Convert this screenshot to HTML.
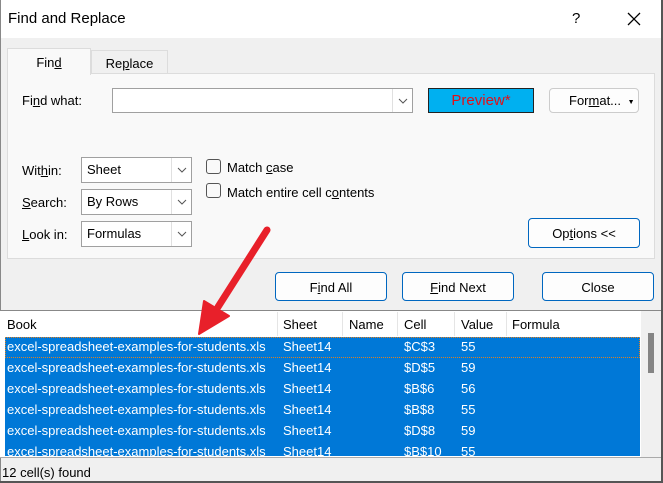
<!DOCTYPE html>
<html><head><meta charset="utf-8"><style>
*{box-sizing:border-box;margin:0;padding:0}
body{width:663px;height:483px;overflow:hidden;background:#f0f0f0;font-family:"Liberation Sans",sans-serif;font-size:13px;color:#000;position:relative}
.a{position:absolute}
.title{left:0;top:0;width:663px;height:38px;background:#fff}
.panel{left:7px;top:73px;width:648px;height:186px;background:#f9f9f9;border:1px solid #dcdcdc}
.tab{background:#f9f9f9;border:1px solid #dcdcdc;border-bottom:none;text-align:center}
.dd{background:#fff;border:1px solid #a0a0a0;padding-left:5px;line-height:24px}
.dd .ar{position:absolute;right:0;top:0;width:20px;height:100%;border-left:1px solid #e0e0e0}
.dd .ar svg{position:absolute;left:5px;top:9px}
.btn{background:#fdfdfd;border:1px solid #0067c0;border-radius:4px;text-align:center}
.cb{width:15px;height:15px;border:1px solid #555;border-radius:3px;background:#f9f9f9}
.row{left:5px;width:635px;height:21px;background:#0078d7;color:#fff;line-height:20px}
.row span,.hd span{position:absolute}
</style></head><body>
<div class="a title"></div>
<div class="a" style="left:8px;top:10px;font-size:15px">Find and Replace</div>
<div class="a" style="left:572px;top:10px;font-size:15px">?</div>
<svg class="a" style="left:627px;top:12px" width="14" height="14"><path d="M1 1L13 13M13 1L1 13" stroke="#000" stroke-width="1.3"/></svg>
<div class="a" style="left:661px;top:0;width:2px;height:483px;background:#555"></div>
<div class="a" style="left:0;top:0;width:1px;height:483px;background:#888"></div>
<div class="a panel"></div>
<div class="a tab" style="left:7px;top:48px;width:84px;height:27px;line-height:28px">Fin<u>d</u></div>
<div class="a tab" style="left:91px;top:50px;width:77px;height:23px;line-height:25px;background:#f0f0f0">Re<u>p</u>lace</div>
<div class="a" style="left:22px;top:93px">Fi<u>n</u>d what:</div>
<div class="a dd" style="left:112px;top:88px;width:301px;height:25px"><div class="ar"><svg width="10" height="6"><path d="M1 1L5 5L9 1" stroke="#555" fill="none"/></svg></div></div>
<div class="a" style="left:428px;top:88px;width:106px;height:25px;background:#00b0f0;border:1px solid #222;color:#e0101a;font-size:15px;text-align:center;line-height:24px">Preview*</div>
<div class="a" style="left:549px;top:88px;width:90px;height:25px;border:1px solid #ccc;border-radius:4px;background:#fdfdfd;line-height:24px;padding-left:19px">For<u>m</u>at... <span style="font-size:7px;margin-left:3px;vertical-align:1px">▼</span></div>
<div class="a" style="left:22px;top:163px">Wit<u>h</u>in:</div>
<div class="a" style="left:22px;top:195px"><u>S</u>earch:</div>
<div class="a" style="left:22px;top:227px"><u>L</u>ook in:</div>
<div class="a dd" style="left:81px;top:157px;width:111px;height:26px">Sheet<div class="ar"><svg width="10" height="6"><path d="M1 1L5 5L9 1" stroke="#555" fill="none"/></svg></div></div>
<div class="a dd" style="left:81px;top:189px;width:111px;height:26px">By Rows<div class="ar"><svg width="10" height="6"><path d="M1 1L5 5L9 1" stroke="#555" fill="none"/></svg></div></div>
<div class="a dd" style="left:81px;top:221px;width:111px;height:26px">Formulas<div class="ar"><svg width="10" height="6"><path d="M1 1L5 5L9 1" stroke="#555" fill="none"/></svg></div></div>
<div class="a cb" style="left:206px;top:159px"></div>
<div class="a cb" style="left:206px;top:183px"></div>
<div class="a" style="left:227px;top:160px">Match <u>c</u>ase</div>
<div class="a" style="left:227px;top:185px">Match entire cell c<u>o</u>ntents</div>
<div class="a btn" style="left:528px;top:218px;width:112px;height:30px;line-height:29px">Op<u>t</u>ions &lt;&lt;</div>
<div class="a btn" style="left:275px;top:272px;width:112px;height:29px;line-height:29px">F<u>i</u>nd All</div>
<div class="a btn" style="left:402px;top:272px;width:112px;height:29px;line-height:29px"><u>F</u>ind Next</div>
<div class="a btn" style="left:542px;top:272px;width:112px;height:29px;line-height:29px">Close</div>
<div class="a" style="left:0;top:310px;width:661px;height:148px;background:#fff;border-top:1px solid #888"></div>
<div class="a hd" style="left:0;top:317px;width:640px;height:16px">
<span style="left:7px">Book</span><span style="left:283px">Sheet</span><span style="left:349px">Name</span><span style="left:404px">Cell</span><span style="left:461px">Value</span><span style="left:512px">Formula</span>
</div>
<div class="a" style="left:277px;top:312px;width:1px;height:24px;background:#e5e5e5"></div>
<div class="a" style="left:342px;top:312px;width:1px;height:24px;background:#e5e5e5"></div>
<div class="a" style="left:397px;top:312px;width:1px;height:24px;background:#e5e5e5"></div>
<div class="a" style="left:454px;top:312px;width:1px;height:24px;background:#e5e5e5"></div>
<div class="a" style="left:506px;top:312px;width:1px;height:24px;background:#e5e5e5"></div>
<div class="a" style="left:641px;top:311px;width:20px;height:147px;background:#f0f0f0"></div>
<div class="a" style="left:648px;top:333px;width:6px;height:40px;background:#858585"></div>
<div class="a row" style="top:337px;outline:1px dotted #e08020;outline-offset:-1px"><span style="left:2px">excel-spreadsheet-examples-for-students.xls</span><span style="left:278px">Sheet14</span><span style="left:399px">$C$3</span><span style="left:456px">55</span></div>
<div class="a row" style="top:358px"><span style="left:2px">excel-spreadsheet-examples-for-students.xls</span><span style="left:278px">Sheet14</span><span style="left:399px">$D$5</span><span style="left:456px">59</span></div>
<div class="a row" style="top:379px"><span style="left:2px">excel-spreadsheet-examples-for-students.xls</span><span style="left:278px">Sheet14</span><span style="left:399px">$B$6</span><span style="left:456px">56</span></div>
<div class="a row" style="top:400px"><span style="left:2px">excel-spreadsheet-examples-for-students.xls</span><span style="left:278px">Sheet14</span><span style="left:399px">$B$8</span><span style="left:456px">55</span></div>
<div class="a row" style="top:421px"><span style="left:2px">excel-spreadsheet-examples-for-students.xls</span><span style="left:278px">Sheet14</span><span style="left:399px">$D$8</span><span style="left:456px">59</span></div>
<div class="a row" style="top:442px;height:14px;overflow:hidden"><span style="left:2px">excel-spreadsheet-examples-for-students.xls</span><span style="left:278px">Sheet14</span><span style="left:399px">$B$10</span><span style="left:456px">55</span></div>
<div class="a" style="left:0;top:457px;width:661px;height:1px;background:#aaa"></div>
<div class="a" style="left:2px;top:465px">12 cell(s) found</div>
<div class="a" style="left:0;top:481px;width:663px;height:2px;background:#555"></div>
<svg class="a" style="left:0;top:0" width="663" height="483"><path d="M267 230L218 307" stroke="#e8202a" stroke-width="7" stroke-linecap="round"/><path d="M199 334L204 301L229 316Z" fill="#e8202a" stroke="#e8202a" stroke-width="2" stroke-linejoin="round"/></svg>
</body></html>
